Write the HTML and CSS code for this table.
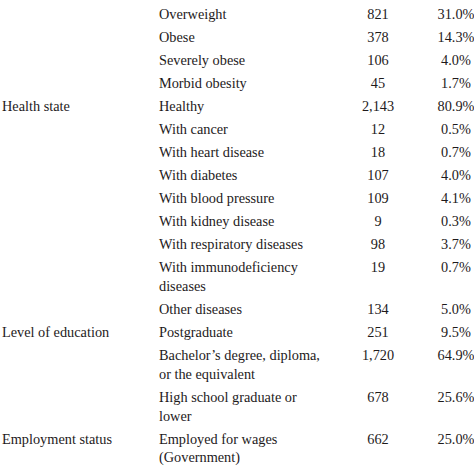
FILE: index.html
```html
<!DOCTYPE html>
<html lang="en">
<head>
<meta charset="utf-8">
<title>Table</title>
<link rel="stylesheet" href="styles.css">
</head>
<body>
<table class="data">
  <colgroup>
    <col class="c-group">
    <col class="c-cat">
    <col class="c-n">
    <col class="c-pct">
  </colgroup>
  <tbody>
    <tr><td></td><td>Overweight</td><td class="num">821</td><td class="num">31.0%</td></tr>
    <tr><td></td><td>Obese</td><td class="num">378</td><td class="num">14.3%</td></tr>
    <tr><td></td><td>Severely obese</td><td class="num">106</td><td class="num">4.0%</td></tr>
    <tr><td></td><td>Morbid obesity</td><td class="num">45</td><td class="num">1.7%</td></tr>
    <tr><td>Health state</td><td>Healthy</td><td class="num">2,143</td><td class="num">80.9%</td></tr>
    <tr><td></td><td>With cancer</td><td class="num">12</td><td class="num">0.5%</td></tr>
    <tr><td></td><td>With heart disease</td><td class="num">18</td><td class="num">0.7%</td></tr>
    <tr><td></td><td>With diabetes</td><td class="num">107</td><td class="num">4.0%</td></tr>
    <tr><td></td><td>With blood pressure</td><td class="num">109</td><td class="num">4.1%</td></tr>
    <tr><td></td><td>With kidney disease</td><td class="num">9</td><td class="num">0.3%</td></tr>
    <tr><td></td><td>With respiratory diseases</td><td class="num">98</td><td class="num">3.7%</td></tr>
    <tr><td></td><td>With immunodeficiency diseases</td><td class="num">19</td><td class="num">0.7%</td></tr>
    <tr><td></td><td>Other diseases</td><td class="num">134</td><td class="num">5.0%</td></tr>
    <tr><td>Level of education</td><td>Postgraduate</td><td class="num">251</td><td class="num">9.5%</td></tr>
    <tr><td></td><td>Bachelor&rsquo;s degree, diploma, or the equivalent</td><td class="num">1,720</td><td class="num">64.9%</td></tr>
    <tr><td></td><td>High school graduate or lower</td><td class="num">678</td><td class="num">25.6%</td></tr>
    <tr class="last"><td>Employment status</td><td>Employed for wages (Government)</td><td class="num">662</td><td class="num">25.0%</td></tr>
  </tbody>
</table>
</body>
</html>
```
FILE: styles.css
```css
body {
  margin: 0;
  padding: 3px 0 0 2px;
  background: #ffffff;
  font-family: "Liberation Serif", serif;
  font-size: 14.3px;
  line-height: 19px;
  color: #1e1a1b;
  width: 480px;
}
.data {
  border-collapse: collapse;
  table-layout: fixed;
  width: 475px;
}
.c-group { width: 157px; }
.c-cat { width: 162px; }
.c-n { width: 114px; }
.c-pct { width: 42px; }
.data td {
  padding: 2px 0;
  vertical-align: top;
  text-align: left;
  font-family: "Liberation Serif", serif;
  font-size: 14.3px;
}
.data td.num {
  text-align: center;
  white-space: nowrap;
}
.data tr.last td {
  line-height: 18px;
}
```
